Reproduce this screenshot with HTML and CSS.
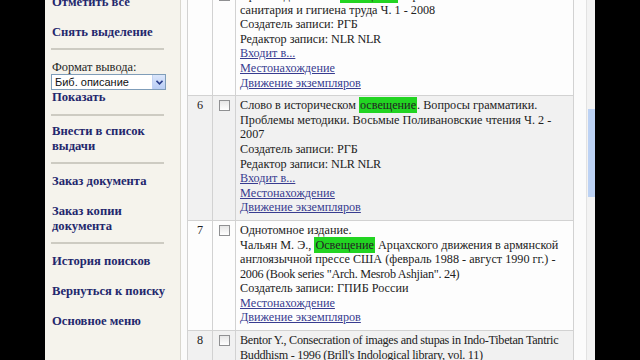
FILE: index.html
```html
<!DOCTYPE html>
<html lang="ru">
<head>
<meta charset="utf-8">
<title>Результаты поиска</title>
<link rel="stylesheet" href="styles.css">
</head>
<body>
<div class="screen">
  <div class="page">
    <aside class="sidebar">
      <a class="nav" href="#">Отметить все</a>
      <a class="nav" href="#">Снять выделение</a>
      <hr class="sep">
      <div class="label">Формат вывода:</div>
      <div class="select"><span class="select-text">Биб. описание</span><span class="select-btn"><svg width="7" height="5" viewBox="0 0 7 5"><path d="M0.5 0.8 L3.5 3.8 L6.5 0.8" fill="none" stroke="#2b3f8c" stroke-width="1.6"/></svg></span></div>
      <a class="nav nav-tight" href="#">Показать</a>
      <hr class="sep sep-b">
      <a class="nav" href="#">Внести в список выдачи</a>
      <hr class="sep">
      <a class="nav" href="#">Заказ документа</a>
      <a class="nav" href="#">Заказ копии документа</a>
      <hr class="sep">
      <a class="nav" href="#">История поисков</a>
      <a class="nav" href="#">Вернуться к поиску</a>
      <a class="nav" href="#">Основное меню</a>
    </aside>
    <main class="main">
      <table class="results">
        <tr class="row-light">
          <td class="num">5</td>
          <td class="chk"><span class="box"></span></td>
          <td class="rec">Производственное <mark>освещение</mark>. Промышленная токсикология.<br>санитария и гигиена труда Ч. 1 - 2008<br>Создатель записи: РГБ<br>Редактор записи: <span class="lat">NLR NLR</span><br><a href="#">Входит в...</a><br><a href="#">Местонахождение</a><br><a href="#">Движение экземпляров</a></td>
        </tr>
        <tr class="row-dark">
          <td class="num">6</td>
          <td class="chk"><span class="box"></span></td>
          <td class="rec">Слово в историческом <mark>освещение</mark>. Вопросы грамматики.<br>Проблемы методики. Восьмые Поливановские чтения Ч. 2 -<br>2007<br>Создатель записи: РГБ<br>Редактор записи: <span class="lat">NLR NLR</span><br><a href="#">Входит в...</a><br><a href="#">Местонахождение</a><br><a href="#">Движение экземпляров</a></td>
        </tr>
        <tr class="row-light">
          <td class="num">7</td>
          <td class="chk"><span class="box"></span></td>
          <td class="rec">Однотомное издание.<br>Чальян М. Э., <mark>Освещение</mark> Арцахского движения в армянской<br>англоязычной прессе США (февраль 1988 - август 1990 гг.) -<br><span class="lat">2006 (Book series "Arch. Mesrob Ashjian". 24)</span><br>Создатель записи: ГПИБ России<br><a href="#">Местонахождение</a><br><a href="#">Движение экземпляров</a></td>
        </tr>
        <tr class="row-dark">
          <td class="num">8</td>
          <td class="chk"><span class="box"></span></td>
          <td class="rec"><span class="lat">Bentor Y., Consecration of images and stupas in Indo-Tibetan Tantric<br>Buddhism - 1996 (Brill's Indological library, vol. 11)</span><br>Создатель записи: РГБ<br><a href="#">Местонахождение</a></td>
        </tr>
      </table>
    </main>
  </div>
  <div class="scrollbar"><div class="thumb"></div></div>
</div>
</body>
</html>
```
FILE: styles.css
```css
html, body {
  margin: 0;
  padding: 0;
  background: #000;
}
.screen {
  position: relative;
  width: 550px;
  height: 360px;
  margin-left: 45px;
  overflow: hidden;
  background: #fbfbfb;
  font-family: "Liberation Serif", "Times New Roman", serif;
}
.page {
  display: flex;
  align-items: stretch;
  margin-top: -15px;
}
.sidebar {
  box-sizing: border-box;
  flex: 0 0 136px;
  width: 136px;
  min-height: 420px;
  padding: 10px 8px 0 7px;
  background: #f5f3ec;
  border-right: 1px solid #d9d7cf;
  display: flex;
  flex-direction: column;
}
.nav {
  display: block;
  max-width: 118px;
  font-size: 12.6px;
  font-weight: bold;
  line-height: 15px;
  color: #23276c;
  text-decoration: none;
  margin-bottom: 15px;
}
.nav-tight {
  margin-bottom: 0;
}
.sep {
  width: 113px;
  height: 2px;
  margin: -7px 0 10px -1px;
  border: 0;
  background: #cdcbc2;
}
.sep-b {
  margin-top: 9px;
  margin-bottom: 8px;
}
.label {
  font-size: 12.4px;
  line-height: 14px;
  color: #1f1f1f;
}
.select {
  box-sizing: border-box;
  width: 115px;
  height: 16px;
  margin-left: -1px;
  border: 1px solid #7f9db9;
  background: #fff;
  display: flex;
  align-items: center;
  justify-content: space-between;
}
.select-text {
  font-family: "Liberation Sans", Arial, sans-serif;
  font-size: 11px;
  color: #111;
  padding-left: 3px;
}
.select-btn {
  width: 12px;
  height: 14px;
  background: linear-gradient(#dbe6fb, #b9cdf4);
  border-left: 1px solid #c3d3f3;
  display: flex;
  align-items: center;
  justify-content: center;
}
.main {
  padding-left: 6px;
}
.results {
  table-layout: fixed;
  width: 387px;
  border-collapse: separate;
  border-spacing: 0;
  border-left: 1px solid #d2d2d2;
  border-top: 1px solid #d2d2d2;
  font-size: 12.2px;
  line-height: 14.6px;
  color: #222;
}
.results td {
  border-right: 1px solid #d2d2d2;
  border-bottom: 1px solid #d2d2d2;
  vertical-align: top;
  padding: 2px 0 5px 0;
}
.row-light td {
  background: #fdfdfd;
}
.row-dark td {
  background: #f1f1f1;
}
.results td.num {
  width: 24px;
  text-align: center;
}
.results td.chk {
  width: 22px;
  text-align: center;
}
.box {
  display: inline-block;
  box-sizing: border-box;
  width: 11px;
  height: 11px;
  margin-top: 2px;
  border: 1px solid #8f9092;
  background: linear-gradient(#e6e6e6, #ffffff);
  vertical-align: top;
}
.results td.rec {
  width: 329px;
  padding-left: 4px;
  padding-right: 4px;
  white-space: nowrap;
  overflow: hidden;
}
.lat {
  letter-spacing: -0.28px;
}
.rec a {
  color: #383c90;
  text-decoration: underline;
}
mark {
  background: #22d422;
  color: #222;
  padding: 1px 1px;
}
.scrollbar {
  position: absolute;
  left: 541px;
  top: 0;
  width: 9px;
  height: 360px;
  background: #f3f3f3;
  border-left: 1px solid #e2e2e2;
}
.thumb {
  position: absolute;
  left: 1px;
  top: 109px;
  width: 7px;
  height: 88px;
  background: #bcd2f4;
}
```
